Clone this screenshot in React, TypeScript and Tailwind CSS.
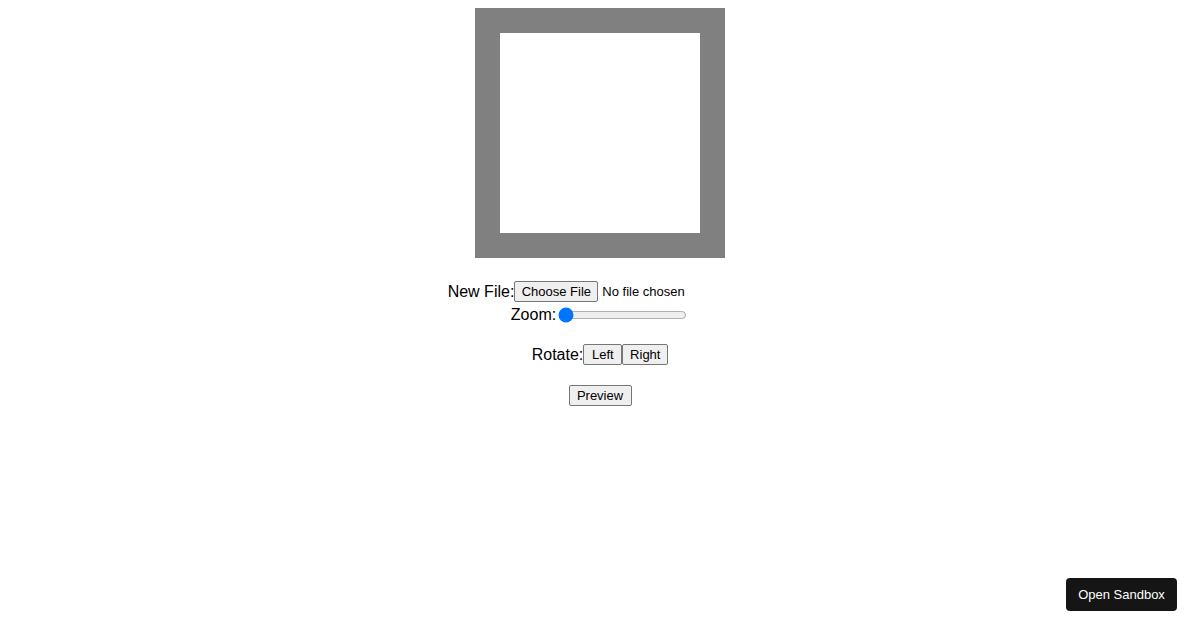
import React from "react";

const btn =
  "bg-[#efefef] border border-[#767676] rounded-[2px] px-[6px] py-[1px] text-[13px] leading-[17px] text-black hover:bg-[#e5e5e5]";

export default function App() {
  return (
    <div
      className="min-h-[630px] w-full bg-white text-black text-[16px]"
      style={{ fontFamily: '"Liberation Sans", Arial, sans-serif' }}
    >
      <div className="flex flex-col items-center pt-2">
        <div className="w-[250px] h-[250px] border-[25px] border-[#808080] bg-white" />
        <div className="mt-[22px] h-[23px] flex items-center">
          <span className="leading-[18px]">New File:</span>
          <div className="flex items-center w-[238px] text-[13px]">
            <button className={btn + " w-[84px]"}>Choose File</button>
            <span className="ml-[4px]">No file chosen</span>
          </div>
        </div>
        <div className="h-[24px] flex items-center">
          <span className="leading-[18px]">Zoom:</span>
          <input
            type="range"
            min={1}
            max={2}
            step={0.01}
            defaultValue={1}
            className="w-[129px] mx-[2px] accent-[#0075ff]"
          />
        </div>
        <div className="mt-[16px] h-[23px] flex items-center">
          <span className="leading-[18px]">Rotate:</span>
          <button className={btn + " w-[39px]"}>Left</button>
          <button className={btn + " w-[46px]"}>Right</button>
        </div>
        <div className="mt-[18px] h-[23px] flex items-center">
          <button className={btn + " w-[63px]"}>Preview</button>
        </div>
      </div>
      <button className="fixed right-[23px] bottom-[19px] w-[111px] h-[33px] rounded-[4px] bg-[#151515] text-white text-[13px] flex items-center justify-center">
        Open Sandbox
      </button>
    </div>
  );
}
